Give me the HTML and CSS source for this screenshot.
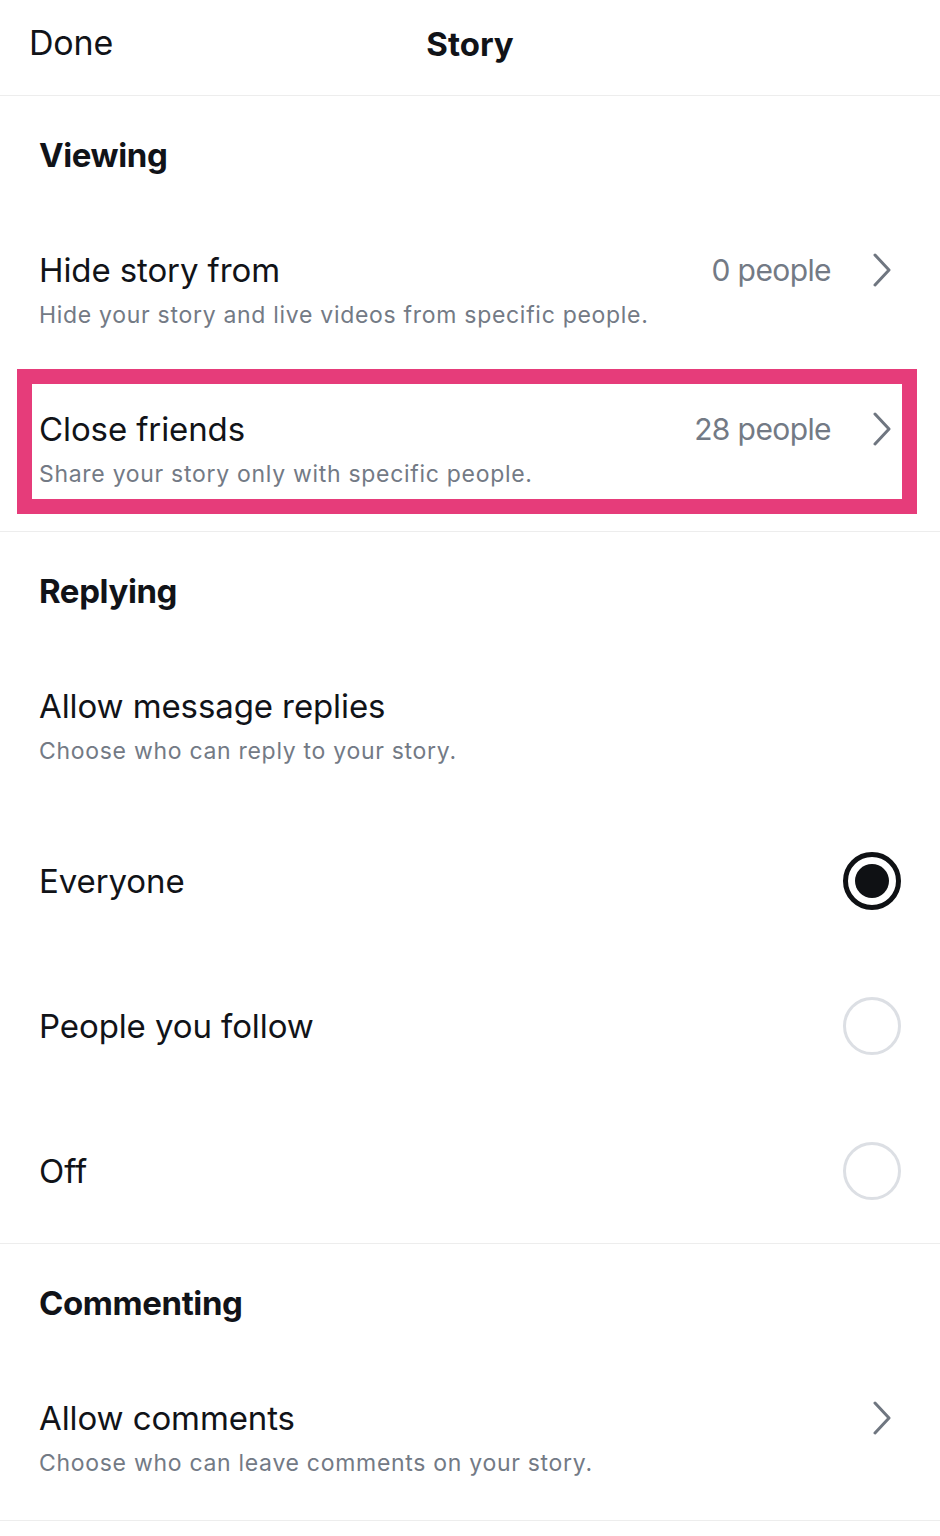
FILE: index.html
```html
<!DOCTYPE html>
<html lang="en">
<head>
<meta charset="utf-8">
<title>Story</title>
<link rel="stylesheet" href="styles.css">
</head>
<body>
<div class="screen">
  <header class="nav">
    <span class="nav-done">Done</span>
    <span class="nav-title">Story</span>
  </header>

  <section class="section">
    <h2 class="section-title">Viewing</h2>
    <div class="row">
      <div class="row-text">
        <div class="row-title">Hide story from</div>
        <div class="row-sub">Hide your story and live videos from specific people.</div>
      </div>
      <span class="row-value">0 people</span>
      <svg class="chevron" viewBox="0 0 20 34" width="20" height="34"><path d="M3 2 L17 17 L3 32" fill="none" stroke="#6f7680" stroke-width="3" stroke-linecap="round" stroke-linejoin="round"/></svg>
    </div>
    <div class="row row-highlight">
      <div class="row-text">
        <div class="row-title">Close friends</div>
        <div class="row-sub">Share your story only with specific people.</div>
      </div>
      <span class="row-value">28 people</span>
      <svg class="chevron" viewBox="0 0 20 34" width="20" height="34"><path d="M3 2 L17 17 L3 32" fill="none" stroke="#6f7680" stroke-width="3" stroke-linecap="round" stroke-linejoin="round"/></svg>
    </div>
  </section>

  <section class="section section-radio">
    <h2 class="section-title">Replying</h2>
    <div class="row">
      <div class="row-text">
        <div class="row-title">Allow message replies</div>
        <div class="row-sub">Choose who can reply to your story.</div>
      </div>
    </div>
    <div class="options">
      <div class="option">
        <span class="option-label">Everyone</span>
        <span class="radio radio-on"></span>
      </div>
      <div class="option">
        <span class="option-label">People you follow</span>
        <span class="radio"></span>
      </div>
      <div class="option">
        <span class="option-label">Off</span>
        <span class="radio"></span>
      </div>
    </div>
  </section>

  <section class="section">
    <h2 class="section-title">Commenting</h2>
    <div class="row">
      <div class="row-text">
        <div class="row-title">Allow comments</div>
        <div class="row-sub">Choose who can leave comments on your story.</div>
      </div>
      <svg class="chevron" viewBox="0 0 20 34" width="20" height="34"><path d="M3 2 L17 17 L3 32" fill="none" stroke="#6f7680" stroke-width="3" stroke-linecap="round" stroke-linejoin="round"/></svg>
    </div>
  </section>
</div>
</body>
</html>
```

FILE: styles.css
```css
* { box-sizing: border-box; }

html, body {
  margin: 0;
  padding: 0;
  background: #ffffff;
}

body {
  font-family: Inter, "Noto Sans", "Liberation Sans", sans-serif;
  color: #111318;
  -webkit-font-smoothing: antialiased;
}

.screen {
  width: 940px;
  display: flex;
  flex-direction: column;
}

.nav {
  height: 96px;
  border-bottom: 1px solid #ededed;
  display: grid;
  grid-template-columns: 1fr auto 1fr;
  align-items: center;
  padding: 0 29px 10px;
}

.nav-done {
  font-size: 34px;
  font-weight: 400;
  justify-self: start;
  letter-spacing: -0.2px;
}

.nav-title {
  font-size: 33px;
  font-weight: 700;
  padding-top: 2px;
}

.section {
  display: flex;
  flex-direction: column;
  padding: 38px 0 17px;
  border-bottom: 1px solid #ededed;
}

.section-radio {
  padding-bottom: 0;
}

.section-title {
  margin: 0 0 73px;
  padding-left: 39px;
  font-size: 33px;
  line-height: 42px;
  font-weight: 700;
  letter-spacing: -0.4px;
}

.row {
  display: flex;
  align-items: flex-start;
  padding: 0 48px 0 39px;
}

.row-text {
  flex: 1;
  display: flex;
  flex-direction: column;
  gap: 9px;
}

.row-title {
  font-size: 33px;
  line-height: 42px;
  letter-spacing: -0.1px;
}

.row-sub {
  font-size: 23px;
  line-height: 30px;
  color: #737a85;
  letter-spacing: 0.7px;
}

.row-value {
  font-size: 30px;
  line-height: 42px;
  color: #737a85;
  margin-right: 41px;
  letter-spacing: -0.6px;
}

.chevron {
  margin-top: 4px;
  flex: none;
}

.row-highlight {
  margin: 39px 23px 0 17px;
  border: 15px solid #e63c7a;
  padding: 24px 10px 10px 7px;
}

.section > .row:last-child {
  margin-bottom: 25px;
}

.section > .row-highlight:last-child {
  margin-bottom: 0;
}

.options {
  display: flex;
  flex-direction: column;
  margin-top: 42px;
}

.option {
  height: 145px;
  display: flex;
  align-items: center;
  justify-content: space-between;
  padding: 0 39px 0 39px;
}

.option-label {
  font-size: 33px;
  letter-spacing: -0.1px;
}

.radio {
  width: 58px;
  height: 58px;
  border-radius: 50%;
  border: 3px solid #dcdfe4;
  display: flex;
  align-items: center;
  justify-content: center;
}

.radio-on {
  border: 5px solid #0f1114;
}

.radio-on::after {
  content: "";
  width: 34px;
  height: 34px;
  border-radius: 50%;
  background: #0f1114;
}
```
